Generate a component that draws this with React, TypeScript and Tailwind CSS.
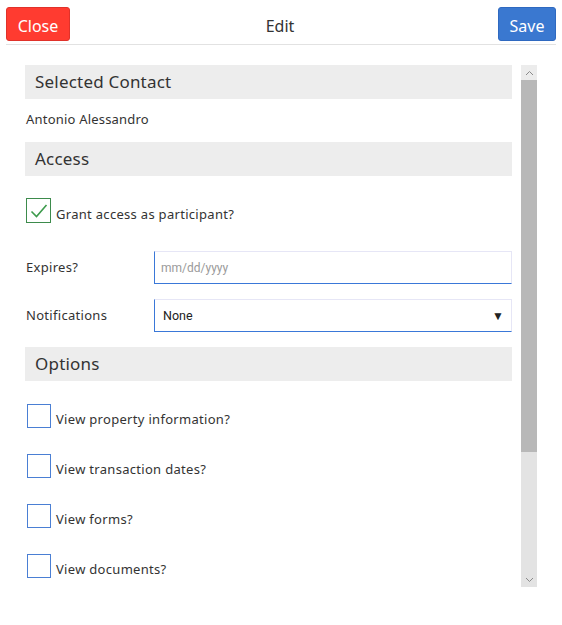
import { useState } from "react";

const options = [
    { id: "property", label: "View property information?" },
    { id: "dates", label: "View transaction dates?" },
    { id: "forms", label: "View forms?" },
    { id: "documents", label: "View documents?" },
];

function SectionBar({ title }: { title: string }) {
    return (
        <div className="h-[34px] bg-[#ededed] flex items-center pl-[10px] text-[17px] text-[#333] tracking-[0.2px]">
            {title}
        </div>
    );
}

export default function App() {
    const [grant, setGrant] = useState(true);
    const [checked, setChecked] = useState<string[]>([]);

    const toggle = (id: string) => {
        if (checked.includes(id)) {
            setChecked(checked.filter((c) => c !== id));
        } else {
            setChecked([...checked, id]);
        }
    };

    return (
        <div className="w-[562px] h-[625px] bg-white font-['Noto_Sans',sans-serif] text-[#333] overflow-hidden">
            {/* header */}
            <div className="mx-[6px] pt-[7px] pb-[3px] border-b border-[#e2e2e2] flex items-center justify-between">
                <button className="h-[34px] w-[64px] pt-[3px] rounded-[3px] bg-[#ff3b30] border border-[#e0322a] text-white text-[16px]">
                    Close
                </button>
                <div className="text-[16px] text-[#333] pt-[3px] pr-[8px]">Edit</div>
                <button className="h-[34px] w-[58px] pt-[3px] rounded-[3px] bg-[#3a78d0] border border-[#2f69c0] text-white text-[16px]">
                    Save
                </button>
            </div>

            {/* body */}
            <div className="mt-[20px] ml-[25px] w-[512px] h-[522px] flex">
                <div className="flex-1 overflow-hidden pr-[9px]">
                    <SectionBar title="Selected Contact" />
                    <div className="mt-[11px] h-[18px] pl-[1px] text-[13px] leading-[18px] tracking-[0.2px]">
                        Antonio Alessandro
                    </div>
                    <div className="mt-[14px]">
                        <SectionBar title="Access" />
                    </div>

                    <div
                        className="mt-[22px] flex gap-[5px] pl-[1px] cursor-pointer"
                        onClick={() => setGrant(!grant)}
                    >
                        <div className="w-[25px] h-[25px] border-[1.5px] border-[#3d8b4c] flex items-center justify-center">
                            {grant && (
                                <svg width="20" height="20" viewBox="0 0 20 20" fill="none">
                                    <path
                                        d="M2.5 10.5 L7.5 15.5 L17.5 4"
                                        stroke="#3d9b4c"
                                        strokeWidth="1.6"
                                    />
                                </svg>
                            )}
                        </div>
                        <span className="self-end text-[13px] leading-[18px] tracking-[0.3px]">
                            Grant access as participant?
                        </span>
                    </div>

                    <div className="mt-[28px] flex items-center">
                        <div className="w-[129px] pl-[1px] text-[13px] tracking-[0.3px]">Expires?</div>
                        <div className="flex-1 h-[33px] border border-[#e6e6f6] border-l-[1.5px] border-l-[#3a78d8] border-b-[1.5px] border-b-[#3a78d8] flex items-center pl-[6px] font-['Roboto',sans-serif] text-[12px] text-[#9a9a9a]">
                            mm/dd/yyyy
                        </div>
                    </div>

                    <div className="mt-[15px] flex items-center">
                        <div className="w-[129px] pl-[1px] text-[13px] tracking-[0.3px]">Notifications</div>
                        <div className="flex-1 h-[33px] border border-[#e6e6f6] border-l-[1.5px] border-l-[#3a78d8] border-b-[1.5px] border-b-[#3a78d8] flex items-center justify-between pl-[8px] pr-[7px] font-['Roboto',sans-serif] text-[12.5px] text-[#222]">
                            <span className="pt-[1px]">None</span>
                            <span className="text-[12px] text-[#222]">▼</span>
                        </div>
                    </div>

                    <div className="mt-[15px]">
                        <SectionBar title="Options" />
                    </div>

                    <div className="mt-[23px] flex flex-col gap-[26px]">
                        {options.map((o) => (
                            <div
                                key={o.id}
                                className="flex gap-[5px] pl-[2px] cursor-pointer"
                                onClick={() => toggle(o.id)}
                            >
                                <div className="w-[24px] h-[24px] border-[1.5px] border-[#4a7fd4] flex items-center justify-center">
                                    {checked.includes(o.id) && (
                                        <svg width="18" height="18" viewBox="0 0 20 20" fill="none">
                                            <path d="M2.5 10.5 L7.5 15.5 L17.5 4" stroke="#4a7fd4" strokeWidth="1.6" />
                                        </svg>
                                    )}
                                </div>
                                <span className="self-end text-[13px] leading-[18px] tracking-[0.3px]">{o.label}</span>
                            </div>
                        ))}
                    </div>
                </div>

                {/* scrollbar */}
                <div className="w-[16px] h-full bg-[#e3e3e3] flex flex-col">
                    <div className="h-[15px] bg-[#ececec] flex items-center justify-center">
                        <svg width="9" height="6" viewBox="0 0 9 6" fill="none">
                            <path d="M1 5 L4.5 1.5 L8 5" stroke="#8a8a8a" strokeWidth="1" />
                        </svg>
                    </div>
                    <div className="h-[372px] bg-[#b8b8b8]" />
                    <div className="flex-1" />
                    <div className="h-[15px] flex items-center justify-center">
                        <svg width="9" height="6" viewBox="0 0 9 6" fill="none">
                            <path d="M1 1 L4.5 4.5 L8 1" stroke="#8a8a8a" strokeWidth="1" />
                        </svg>
                    </div>
                </div>
            </div>
        </div>
    );
}
